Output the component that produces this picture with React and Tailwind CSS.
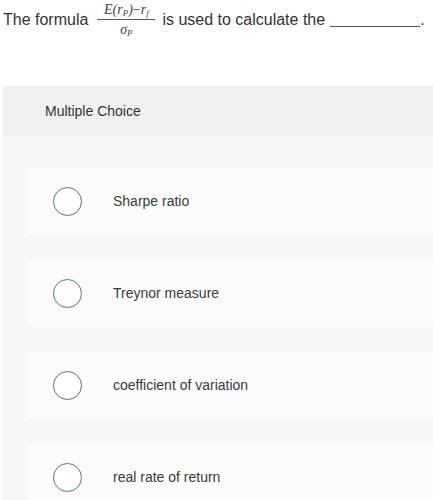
import React from 'react';

const options = ['Sharpe ratio', 'Treynor measure', 'coefficient of variation', 'real rate of return'];

const Formula = () => (
  <span className="inline-flex flex-col items-center ml-[9px] mr-[7px] font-['Liberation_Serif',serif] italic text-[14px] leading-none text-[#444]">
    <span className="px-[1px] pb-[2px] whitespace-nowrap">
      E(r<sub className="text-[9px]">P</sub>)<span className="not-italic">−</span>r<sub className="text-[9px]">f</sub>
    </span>
    <span className="w-[58px] border-t border-[#555]"></span>
    <span className="pt-[3px]">
      σ<sub className="text-[9px]">P</sub>
    </span>
  </span>
);

const Option = ({ label }) => (
  <div className="flex items-center h-[66px] bg-[#fbfbfb] pl-[25px]">
    <span className="w-[29px] h-[29px] rounded-full border-[1.5px] border-[#5d6d7e] bg-white shrink-0"></span>
    <span className="ml-[31px] text-[14px] text-[#3a3a3a]">{label}</span>
  </div>
);

export default function App() {
  return (
    <div className="w-[433px] h-[500px] overflow-hidden bg-white font-['Liberation_Sans',Arial,sans-serif]">
      <div className="pl-[3px] pt-[3px] h-[86px]">
        <p className="flex items-center text-[16px] text-[#333]">
          <span>The formula</span>
          <Formula />
          <span>is used to calculate the</span>
          <span className="inline-block w-[90px] border-b border-[#555] ml-[5px] self-end mb-[10px]"></span>
          <span>.</span>
        </p>
      </div>
      <div className="ml-[3px]">
        <div className="h-[50px] bg-[#f0f0f0] flex items-center pl-[42px] text-[14px] text-[#333]">
          Multiple Choice
        </div>
        <div className="bg-[#f6f6f6] pt-[32px] pl-[25px] flex flex-col gap-[26px] pb-[26px]">
          {options.map((o) => (
            <Option key={o} label={o} />
          ))}
        </div>
      </div>
    </div>
  );
}
